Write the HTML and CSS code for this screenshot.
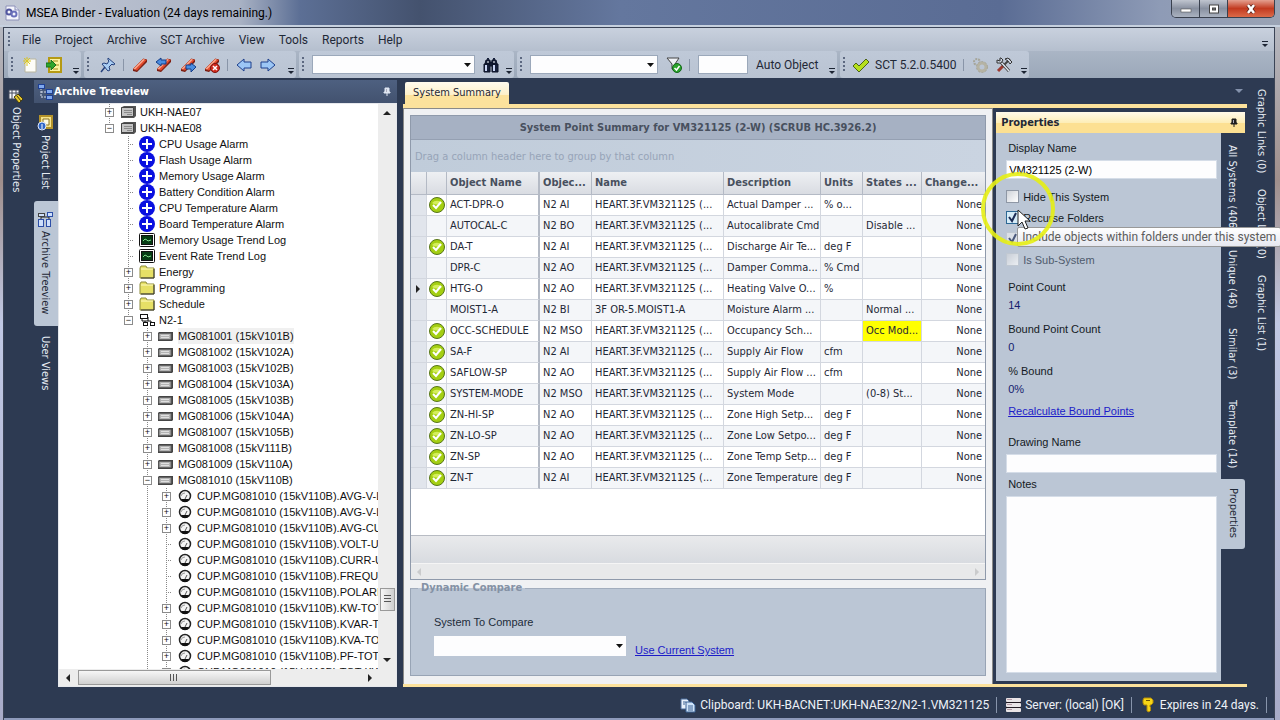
FILE: index.html
```html
<!DOCTYPE html>
<html lang="en">
<head>
<meta charset="utf-8">
<title>MSEA Binder - Evaluation (24 days remaining.)</title>
<link rel="stylesheet" href="styles.css">
</head>
<body>
<svg class="defs" aria-hidden="true">
  <symbol id="i-plus" viewBox="0 0 16 16"><circle cx="8" cy="8" r="8" fill="#0a10e0"/><path d="M8 3v10M3 8h10" stroke="#fff" stroke-width="2"/></symbol>
  <symbol id="i-nae" viewBox="0 0 16 16"><path d="M2 3l2-1h12v10l-2 2H1V4z" fill="#555"/><path d="M1.500 3.500h12v9h-12z" fill="#c4c4c4" stroke="#444"/><path d="M4 6.500h8M4 8.500h8M7 10.500h5" stroke="#8a8a8a"/></symbol>
  <symbol id="i-dev" viewBox="0 0 16 16"><path d="M0 5l1-1h14v8l-1 1H0z" fill="#444"/><path d="M1 5.500h12v6H1z" fill="#b4b4b4" stroke="#666"/><path d="M3 7.500h8M3 9.500h8" stroke="#e0e0e0"/></symbol>
  <symbol id="i-trend" viewBox="0 0 16 16"><rect x="0.500" y="1.500" width="15" height="13" rx="1" fill="#fff" stroke="#111"/><rect x="2.500" y="3.500" width="11" height="9" fill="#063c14" stroke="#111"/><path d="M4 9l2-2 2 1 1 1 3-1" fill="none" stroke="#7fdc8a"/></symbol>
  <symbol id="i-folder" viewBox="0 0 16 16"><path d="M1 4l1-2h5l1 2h7v10H1z" fill="#e6e066" stroke="#8d8b3c"/><path d="M2 5h12" stroke="#fffbc0"/><path d="M15 5v9H2" fill="none" stroke="#333"/></symbol>
  <symbol id="i-net" viewBox="0 0 16 16"><g fill="#fff" stroke="#111"><path d="M3 5v4h9v3M6 9v3M9 5V9" fill="none"/><rect x="1.500" y="2.500" width="7" height="4"/><rect x="4.500" y="10.500" width="4" height="3"/><rect x="11.500" y="10.500" width="4" height="3"/></g></symbol>
  <symbol id="i-pt" viewBox="0 0 16 16"><circle cx="8" cy="8" r="5.500" fill="#f4f4f4" stroke="#222" stroke-width="1.500"/><path d="M4 11h8l-2 3H6z" fill="#111"/><path d="M8 11l2-4" stroke="#555"/><path d="M4 8a4 4 0 0 1 4-3" fill="none" stroke="#999"/></symbol>
  <symbol id="i-ok" viewBox="0 0 16 16"><circle cx="8" cy="8" r="7.500" fill="#a4cf12" stroke="#56751a"/><path d="M3 6a6 5 0 0 1 10 0q-5 3-10 0" fill="#d4ee5c"/><path d="M4 8l3 3 5-6" fill="none" stroke="#fff" stroke-width="2"/></symbol>
  <symbol id="i-tree" viewBox="0 0 16 16"><path d="M4 4v9h5M4 8h5" fill="none" stroke="#d6deee" stroke-dasharray="2 1"/><g fill="#7fa8ee" stroke="#1d3f94"><rect x="1.500" y="0.500" width="6" height="4"/><rect x="9.500" y="5.500" width="6" height="4"/><rect x="9.500" y="11.500" width="6" height="4"/></g></symbol>
  <symbol id="i-tree2" viewBox="0 0 16 16"><path d="M12 4v5M4 6h8M4 6v3" fill="none" stroke="#222"/><g fill="#cfe0fb" stroke="#2d4fa8"><rect x="10.500" y="1.500" width="5" height="4"/><rect x="1.500" y="2.500" width="6" height="3" stroke="#444"/><rect x="1.500" y="8.500" width="5" height="7"/><rect x="9.500" y="8.500" width="4" height="7"/></g></symbol>
  <symbol id="i-pin" viewBox="0 0 10 10"><path d="M3 1h4v4h1v1H2V5h1zM5 6v3" fill="currentColor" stroke="currentColor"/><path d="M4.500 2v3" stroke="#aab"/></symbol>
  <symbol id="i-book" viewBox="0 0 16 16"><path d="M1 12L11 2l4 1-10 11z" fill="#e4492b" stroke="#a02a16"/><path d="M1 12L11 2l2 .5L3 12.500z" fill="#f7a48c"/><path d="M1 12v2l4 1L15 5V3L5 14z" fill="#7a1c10"/></symbol>
  <symbol id="i-more" viewBox="0 0 8 8"><path d="M1 1.500h6" stroke="#1c2433"/><path d="M1 4h6L4 7z" fill="#1c2433"/></symbol>
</svg>

<header class="titlebar">
  <svg class="ic" viewBox="0 0 16 16"><path d="M2 1h9l4 4v10H2z" fill="#f4f5fc" stroke="#8c90b8"/><circle cx="5" cy="7" r="2.500" fill="none" stroke="#5156a0" stroke-width="2"/><circle cx="10" cy="9" r="2.500" fill="none" stroke="#6a70bb" stroke-width="2"/><path d="M11 1v4h4" fill="#dfe2f2" stroke="#8c90b8"/></svg>
  <h1>MSEA Binder - Evaluation (24 days remaining.)</h1>
  <div class="winbtns">
    <button aria-label="Minimize"><svg viewBox="0 0 14 10"><rect x="2" y="5" width="10" height="3" fill="#fff" stroke="#555" stroke-width=".6"/></svg></button>
    <button aria-label="Maximize"><svg viewBox="0 0 14 10"><rect x="2.500" y="1" width="9" height="8" fill="#fff" stroke="#444"/><rect x="5.500" y="4" width="3" height="2" fill="#777" stroke="#444"/></svg></button>
    <button class="close" aria-label="Close"><svg viewBox="0 0 14 10"><path d="M4 1l6 8M10 1L4 9" stroke="#5a2018" stroke-width="4"/><path d="M4 1l6 8M10 1L4 9" stroke="#fff" stroke-width="2.500"/></svg></button>
  </div>
</header>

<div class="app">
  <nav class="menubar">
    <span class="grip"></span>
    <button>File</button><button>Project</button><button>Archive</button><button>SCT Archive</button><button>View</button><button>Tools</button><button>Reports</button><button>Help</button>
    <svg class="more end"><use href="#i-more"/></svg>
  </nav>

  <div class="toolbars">
    <div class="strip s1"><span class="grip"></span>
      <button aria-label="New"><svg class="ic" viewBox="0 0 16 16"><path d="M3 2h11v13H3z" fill="#fdfdf8" stroke="#b9b6a0"/><path d="M5 0v9M1 4h8M2 1l6 6M8 1L2 7" stroke="#d8c62a"/></svg></button>
      <button aria-label="Open"><svg class="ic" viewBox="0 0 16 16"><path d="M3 1h12v14H3z" fill="#fbf3a0" stroke="#b59a14" stroke-width="2"/><path d="M7 4h5M9 8h4M7 12h5" stroke="#a38f20"/><path d="M0 6h5V3l5 5-5 5v-3H0z" fill="#2fa52c" stroke="#17701a"/></svg></button>
      <svg class="more"><use href="#i-more"/></svg></div>
    <div class="strip s2"><span class="grip"></span>
      <button aria-label="Pin"><svg class="ic" viewBox="0 0 16 16"><path d="M8 1l7 6-2 1-1-1-3 3 1 3-2 1-6-7 2-1 3 1 2-3-1-1z" fill="#a9cdf3" stroke="#24407c"/><path d="M5 10l-4 5" stroke="#24407c" stroke-width="1.500"/></svg></button>
      <i class="sep"></i>
      <button aria-label="Bookmark"><svg class="ic"><use href="#i-book"/></svg></button>
      <button aria-label="Previous bookmark"><svg class="ic" viewBox="0 0 16 16"><use href="#i-book" width="16" height="16"/><path d="M0 5l5-4v2h5v4H5v2z" fill="#4a8de0" stroke="#143c88"/></svg></button>
      <button aria-label="Next bookmark"><svg class="ic" viewBox="0 0 16 16"><use href="#i-book" width="16" height="16"/><path d="M16 10l-5-4v2H6v4h5v3z" fill="#4a8de0" stroke="#143c88"/></svg></button>
      <button aria-label="Clear bookmarks"><svg class="ic" viewBox="0 0 16 16"><use href="#i-book" width="16" height="16"/><circle cx="11" cy="11" r="4.500" fill="#d22c20" stroke="#7a1510"/><path d="M9 9l4 4M13 9l-4 4" stroke="#fff" stroke-width="1.500"/></svg></button>
      <i class="sep"></i>
      <button aria-label="Back"><svg class="ic" viewBox="0 0 16 16"><path d="M1 8l7-6v3h7v6H8v3z" fill="#9cc6f5" stroke="#1d3f8c"/></svg></button>
      <button aria-label="Forward"><svg class="ic" viewBox="0 0 16 16"><path d="M15 8L8 2v3H1v6h7v3z" fill="#9cc6f5" stroke="#1d3f8c"/></svg></button>
      <svg class="more"><use href="#i-more"/></svg></div>
    <div class="strip s3"><span class="grip"></span>
      <select aria-label="Search"><option></option></select>
      <button aria-label="Find"><svg class="ic" viewBox="0 0 16 16"><g fill="#17203a" stroke="#0c1226"><path d="M3 3h4v4H2zM9 3h4l1 4H9zM1 7h6v8H1zM9 7h6v8H9z"/><path d="M7 5h2v4H7z"/></g><path d="M4 1h2v2H4zM10 1h2v2h-2z" fill="#17203a"/><path d="M3 8v6M11 8v6" stroke="#c9d4f2" stroke-width="2"/><path d="M5 4v2M11 4v2" stroke="#fff"/></svg></button>
      <svg class="more"><use href="#i-more"/></svg></div>
    <div class="strip s4"><span class="grip"></span>
      <select aria-label="Filter"><option></option></select>
      <button aria-label="Apply filter"><svg class="ic" viewBox="0 0 16 16"><path d="M1 1h12L9 7v7l-3-2V7z" fill="#eef1f6" stroke="#444"/><circle cx="11" cy="11" r="4.500" fill="#2ba52c" stroke="#14661a"/><path d="M8.500 11l2 2 3-4" fill="none" stroke="#fff" stroke-width="1.500"/></svg></button>
      <i class="sep"></i>
      <input type="text" aria-label="Object number">
      <button class="txt">Auto Object</button>
      <svg class="more"><use href="#i-more"/></svg></div>
    <div class="strip s5"><span class="grip"></span>
      <button class="txt sct"><svg class="ic" viewBox="0 0 16 16"><path d="M0 9l3-3 3 3 7-7 3 3L6 15z" fill="#b6e01c" stroke="#4c6416"/></svg>SCT 5.2.0.5400</button>
      <i class="sep"></i>
      <button aria-label="Settings"><svg class="ic" viewBox="0 0 16 16"><g fill="none" stroke="#a5a59a"><circle cx="5" cy="5" r="3" stroke-width="2" stroke-dasharray="2 1"/><circle cx="10" cy="10" r="4" stroke-width="3" stroke="#b5b3a4"/><circle cx="10" cy="10" r="5.500" stroke-dasharray="2 1.500"/></g></svg></button>
      <button aria-label="Tools"><svg class="ic" viewBox="0 0 16 16"><path d="M2 14L8 8" stroke="#9c3a30" stroke-width="3"/><path d="M8 8l6-6" stroke="#444" stroke-width="2"/><path d="M3 3l10 11" stroke="#333" stroke-width="3"/><path d="M3 3l10 11" stroke="#dfe5ee" stroke-width="1.500"/><path d="M1 3v3h4l2-3-2-2H4v3zM9 2l3-1 4 4-2 2-2-3z" fill="#cdd5e2" stroke="#333"/></svg></button>
      <svg class="more"><use href="#i-more"/></svg></div>
  </div>

  <main class="work">
    <nav class="rail outer-left">
      <button><svg class="ic" viewBox="0 0 16 16"><path d="M1 2h10v9H1z" fill="#f6f7fb" stroke="#444a5c"/><path d="M1 5h10M4 2v9M8 2v9" stroke="#444a5c"/><path d="M6 9l4-3 5 5-4 4z" fill="#e6c82c" stroke="#453c10"/><path d="M9 8l4 5" stroke="#453c10"/></svg>Object Properties</button>
    </nav>

    <section class="dock">
      <h2 class="dockhead"><svg class="ic"><use href="#i-tree"/></svg>Archive Treeview<svg class="pin"><use href="#i-pin"/></svg></h2>
      <div class="dockbody">
        <nav class="rail inner-left">
          <button class="pl"><svg class="ic" viewBox="0 0 16 16"><path d="M3 1h12v12H3z" fill="#f7e48c" stroke="#b3922a" stroke-width="2"/><path d="M6 4h6v6H6z" fill="#fffbe0" stroke="#8a7428"/><circle cx="5" cy="11" r="4" fill="#2f66c8" stroke="#dfe8fb"/><path d="M5 9v5" stroke="#fff"/></svg>Project List</button>
          <button class="sel"><svg class="ic"><use href="#i-tree2"/></svg>Archive Treeview</button>
          <button class="uv">User Views</button>
        </nav>
        <div class="treebox">
          <div class="treeview">
            <ul class="tree">
              <li><div class="row"><button class="ex">+</button><svg class="ic"><use href="#i-nae"/></svg>UKH-NAE07</div></li>
              <li><div class="row"><button class="ex">−</button><svg class="ic"><use href="#i-nae"/></svg>UKH-NAE08</div>
                <ul>
                  <li><div class="row leaf"><svg class="ic"><use href="#i-plus"/></svg>CPU Usage Alarm</div></li>
                  <li><div class="row leaf"><svg class="ic"><use href="#i-plus"/></svg>Flash Usage Alarm</div></li>
                  <li><div class="row leaf"><svg class="ic"><use href="#i-plus"/></svg>Memory Usage Alarm</div></li>
                  <li><div class="row leaf"><svg class="ic"><use href="#i-plus"/></svg>Battery Condition Alarm</div></li>
                  <li><div class="row leaf"><svg class="ic"><use href="#i-plus"/></svg>CPU Temperature Alarm</div></li>
                  <li><div class="row leaf"><svg class="ic"><use href="#i-plus"/></svg>Board Temperature Alarm</div></li>
                  <li><div class="row leaf"><svg class="ic"><use href="#i-trend"/></svg>Memory Usage Trend Log</div></li>
                  <li><div class="row leaf"><svg class="ic"><use href="#i-trend"/></svg>Event Rate Trend Log</div></li>
                  <li><div class="row"><button class="ex">+</button><svg class="ic"><use href="#i-folder"/></svg>Energy</div></li>
                  <li><div class="row"><button class="ex">+</button><svg class="ic"><use href="#i-folder"/></svg>Programming</div></li>
                  <li><div class="row"><button class="ex">+</button><svg class="ic"><use href="#i-folder"/></svg>Schedule</div></li>
                  <li><div class="row"><button class="ex">−</button><svg class="ic"><use href="#i-net"/></svg>N2-1</div>
                    <ul>
                      <li><div class="row"><button class="ex">+</button><svg class="ic"><use href="#i-dev"/></svg><span class="hot">MG081001 (15kV101B)</span></div></li>
                      <li><div class="row"><button class="ex">+</button><svg class="ic"><use href="#i-dev"/></svg>MG081002 (15kV102A)</div></li>
                      <li><div class="row"><button class="ex">+</button><svg class="ic"><use href="#i-dev"/></svg>MG081003 (15kV102B)</div></li>
                      <li><div class="row"><button class="ex">+</button><svg class="ic"><use href="#i-dev"/></svg>MG081004 (15kV103A)</div></li>
                      <li><div class="row"><button class="ex">+</button><svg class="ic"><use href="#i-dev"/></svg>MG081005 (15kV103B)</div></li>
                      <li><div class="row"><button class="ex">+</button><svg class="ic"><use href="#i-dev"/></svg>MG081006 (15kV104A)</div></li>
                      <li><div class="row"><button class="ex">+</button><svg class="ic"><use href="#i-dev"/></svg>MG081007 (15kV105B)</div></li>
                      <li><div class="row"><button class="ex">+</button><svg class="ic"><use href="#i-dev"/></svg>MG081008 (15kV111B)</div></li>
                      <li><div class="row"><button class="ex">+</button><svg class="ic"><use href="#i-dev"/></svg>MG081009 (15kV110A)</div></li>
                      <li class="open"><div class="row"><button class="ex">−</button><svg class="ic"><use href="#i-dev"/></svg>MG081010 (15kV110B)</div>
                        <ul>
                          <li><div class="row"><button class="ex">+</button><svg class="ic"><use href="#i-pt"/></svg>CUP.MG081010 (15kV110B).AVG-V-L</div></li>
                          <li><div class="row"><button class="ex">+</button><svg class="ic"><use href="#i-pt"/></svg>CUP.MG081010 (15kV110B).AVG-V-L</div></li>
                          <li><div class="row"><button class="ex">+</button><svg class="ic"><use href="#i-pt"/></svg>CUP.MG081010 (15kV110B).AVG-CU</div></li>
                          <li><div class="row leaf"><svg class="ic"><use href="#i-pt"/></svg>CUP.MG081010 (15kV110B).VOLT-U</div></li>
                          <li><div class="row leaf"><svg class="ic"><use href="#i-pt"/></svg>CUP.MG081010 (15kV110B).CURR-U</div></li>
                          <li><div class="row leaf"><svg class="ic"><use href="#i-pt"/></svg>CUP.MG081010 (15kV110B).FREQUN</div></li>
                          <li><div class="row leaf"><svg class="ic"><use href="#i-pt"/></svg>CUP.MG081010 (15kV110B).POLARI</div></li>
                          <li><div class="row"><button class="ex">+</button><svg class="ic"><use href="#i-pt"/></svg>CUP.MG081010 (15kV110B).KW-TOT</div></li>
                          <li><div class="row"><button class="ex">+</button><svg class="ic"><use href="#i-pt"/></svg>CUP.MG081010 (15kV110B).KVAR-TO</div></li>
                          <li><div class="row"><button class="ex">+</button><svg class="ic"><use href="#i-pt"/></svg>CUP.MG081010 (15kV110B).KVA-TO</div></li>
                          <li><div class="row"><button class="ex">+</button><svg class="ic"><use href="#i-pt"/></svg>CUP.MG081010 (15kV110B).PF-TOT</div></li>
                          <li><div class="row"><button class="ex">+</button><svg class="ic"><use href="#i-pt"/></svg>CUP.MG081010 (15kV110B).TOT-KW</div></li>
                        </ul></li>
                    </ul></li>
                </ul></li>
            </ul>
          </div>
          <div class="vscroll"><i class="tri up"></i><span class="vspace"></span><span class="vthumb"></span><span class="vrest"></span><i class="tri down"></i></div>
          <div class="hscroll"><i class="tri left"></i><span class="hthumb"></span><span class="hspace"></span><i class="tri right"></i></div>
        </div>
      </div>
    </section>

    <section class="center">
      <div class="tabs"><button class="tab">System Summary</button><i class="tri down"></i></div>
      <div class="docs">
        <article class="doc">
          <div class="grid">
            <h2>System Point Summary for VM321125 (2-W) (SCRUB HC.3926.2)</h2>
            <p class="group">Drag a column header here to group by that column</p>
            <table>
              <colgroup><col class="c1"><col class="c2"><col class="c3"><col class="c4"><col class="c5"><col class="c6"><col class="c7"><col class="c8"><col class="c9"></colgroup>
              <thead><tr><th></th><th></th><th>Object Name</th><th>Objec...</th><th>Name</th><th>Description</th><th>Units</th><th>States ...</th><th>Change...</th></tr></thead>
              <tbody>
                <tr><td></td><td><svg class="ic"><use href="#i-ok"/></svg></td><td>ACT-DPR-O</td><td>N2 AI</td><td>HEART.3F.VM321125 (...</td><td>Actual Damper ...</td><td>% o...</td><td></td><td>None</td></tr>
                <tr><td></td><td></td><td>AUTOCAL-C</td><td>N2 BO</td><td>HEART.3F.VM321125 (...</td><td>Autocalibrate Cmd</td><td></td><td>Disable ...</td><td>None</td></tr>
                <tr><td></td><td><svg class="ic"><use href="#i-ok"/></svg></td><td>DA-T</td><td>N2 AI</td><td>HEART.3F.VM321125 (...</td><td>Discharge Air Te...</td><td>deg F</td><td></td><td>None</td></tr>
                <tr><td></td><td></td><td>DPR-C</td><td>N2 AO</td><td>HEART.3F.VM321125 (...</td><td>Damper Comma...</td><td>% Cmd</td><td></td><td>None</td></tr>
                <tr><td><i class="tri right"></i></td><td><svg class="ic"><use href="#i-ok"/></svg></td><td>HTG-O</td><td>N2 AO</td><td>HEART.3F.VM321125 (...</td><td>Heating Valve O...</td><td>%</td><td></td><td>None</td></tr>
                <tr><td></td><td></td><td>MOIST1-A</td><td>N2 BI</td><td>3F OR-5.MOIST1-A</td><td>Moisture Alarm ...</td><td></td><td>Normal ...</td><td>None</td></tr>
                <tr><td></td><td><svg class="ic"><use href="#i-ok"/></svg></td><td>OCC-SCHEDULE</td><td>N2 MSO</td><td>HEART.3F.VM321125 (...</td><td>Occupancy Sch...</td><td></td><td class="mark">Occ Mod...</td><td>None</td></tr>
                <tr><td></td><td><svg class="ic"><use href="#i-ok"/></svg></td><td>SA-F</td><td>N2 AI</td><td>HEART.3F.VM321125 (...</td><td>Supply Air Flow</td><td>cfm</td><td></td><td>None</td></tr>
                <tr><td></td><td><svg class="ic"><use href="#i-ok"/></svg></td><td>SAFLOW-SP</td><td>N2 AO</td><td>HEART.3F.VM321125 (...</td><td>Supply Air Flow ...</td><td>cfm</td><td></td><td>None</td></tr>
                <tr><td></td><td><svg class="ic"><use href="#i-ok"/></svg></td><td>SYSTEM-MODE</td><td>N2 MSO</td><td>HEART.3F.VM321125 (...</td><td>System Mode</td><td></td><td>(0-8) St...</td><td>None</td></tr>
                <tr><td></td><td><svg class="ic"><use href="#i-ok"/></svg></td><td>ZN-HI-SP</td><td>N2 AO</td><td>HEART.3F.VM321125 (...</td><td>Zone High Setp...</td><td>deg F</td><td></td><td>None</td></tr>
                <tr><td></td><td><svg class="ic"><use href="#i-ok"/></svg></td><td>ZN-LO-SP</td><td>N2 AO</td><td>HEART.3F.VM321125 (...</td><td>Zone Low Setpo...</td><td>deg F</td><td></td><td>None</td></tr>
                <tr><td></td><td><svg class="ic"><use href="#i-ok"/></svg></td><td>ZN-SP</td><td>N2 AO</td><td>HEART.3F.VM321125 (...</td><td>Zone Temp Setp...</td><td>deg F</td><td></td><td>None</td></tr>
                <tr><td></td><td><svg class="ic"><use href="#i-ok"/></svg></td><td>ZN-T</td><td>N2 AI</td><td>HEART.3F.VM321125 (...</td><td>Zone Temperature</td><td>deg F</td><td></td><td>None</td></tr>
              </tbody>
            </table>
            <div class="blank"></div>
            <div class="foot"></div>
            <div class="ghost"><i class="tri left"></i><i class="tri right"></i></div>
          </div>
          <fieldset>
            <legend>Dynamic Compare</legend>
            <label for="cmp">System To Compare</label>
            <div class="cmprow"><select id="cmp"><option></option></select><a href="#">Use Current System</a></div>
          </fieldset>
        </article>

        <aside class="props">
          <h2>Properties<svg class="pin"><use href="#i-pin"/></svg></h2>
          <div class="propbody">
            <form>
              <label for="dn">Display Name</label>
              <input id="dn" type="text" value="VM321125 (2-W)">
              <label class="chk"><input type="checkbox">Hide This System</label>
              <div class="hover">
                <label class="chk"><input type="checkbox" class="focus" checked>Recurse Folders</label>
                <div class="tip" role="tooltip">Include objects within folders under this system</div>
                <svg class="ring" viewBox="0 0 76 76"><circle cx="38" cy="38" r="35" fill="none" stroke="#e6ee14" stroke-opacity=".9" stroke-width="4"/><path d="M38 39v16l4-4 3 7 3-1-3-7h5z" fill="#fff" stroke="#222"/></svg>
              </div>
              <label class="chk off"><input type="checkbox" aria-label="Unavailable option" checked disabled></label>
              <label class="chk off"><input type="checkbox" disabled>Is Sub-System</label>
              <dl>
                <dt>Point Count</dt><dd>14</dd>
                <dt>Bound Point Count</dt><dd>0</dd>
                <dt>% Bound</dt><dd>0%</dd>
              </dl>
              <a href="#">Recalculate Bound Points</a>
              <label for="dr">Drawing Name</label>
              <input id="dr" type="text">
              <label class="nl" for="nt">Notes</label>
              <textarea id="nt"></textarea>
            </form>
            <nav class="rail inner-right">
              <button>All Systems (406)</button><button>Unique (46)</button><button>Similar (3)</button><button>Template (14)</button><button class="sel">Properties</button>
            </nav>
          </div>
        </aside>
      </div>
    </section>

    <nav class="rail outer-right">
      <button>Graphic Links (0)</button><button>Object List (0)</button><button>Graphic List (1)</button>
    </nav>
  </main>

  <footer class="status">
    <span><svg class="ic" viewBox="0 0 16 16"><path d="M1 2h6l2 2v8H1z" fill="#e8f1fb" stroke="#4a6d9c"/><path d="M6 5h6l3 3v7H6z" fill="#cfe3f8" stroke="#3c6294"/><path d="M8 9h5M8 11h5M8 13h5M3 5h3M3 7h2" stroke="#3c6294"/></svg>Clipboard: UKH-BACNET:UKH-NAE32/N2-1.VM321125</span>
    <span><svg class="ic" viewBox="0 0 16 16"><g fill="#e9e4e6"><rect x="1" y="1" width="15" height="4" rx="1"/><rect x="1" y="6" width="15" height="4" rx="1"/><rect x="1" y="11" width="15" height="4" rx="1"/></g><path d="M1 5.500h15M1 10.500h15" stroke="#221a22"/><path d="M2 2.500h5M2 7.500h5M2 12.500h5" stroke="#b59aa6"/></svg>Server: (local) [OK]</span>
    <span><svg class="ic" viewBox="0 0 16 16"><path d="M4 1h7l2 2v3l-2 2h-1v2l1 1-1 1 1 1-2 2-2-1V8H4L3 6V3z" fill="#f7d516" stroke="#b38c08"/><rect x="6" y="3" width="4" height="1" fill="#6d5300"/></svg>Expires in 24 days.</span>
  </footer>
</div>
</body>
</html>
```
FILE: styles.css
```css
:root {
  --navy: #2d3a52;
  --panel: #bbc6d5;
  --sand: #fce29c;
  --ui: Roboto, "Noto Sans", sans-serif;
  --tahoma: "DejaVu Sans Condensed", "Noto Sans", sans-serif;
  --plain: "Liberation Sans", Arial, sans-serif;
}
* { box-sizing: border-box; }
body {
  margin: 0;
  height: 100vh;
  overflow: hidden;
  display: flex;
  flex-direction: column;
  font: 12px/16px var(--ui);
  color: #1f2836;
  background: linear-gradient(#b9bfca, #a08f8c 25%, #c0c8e4 45%, #a8abc8);
}
h1, h2, p, ul, dl, dd, fieldset { margin: 0; padding: 0; }
button { font: inherit; color: inherit; background: none; border: 0; padding: 0; }
input, select, textarea { font: inherit; border: 0; border-radius: 0; background: #fdfdfe; margin: 0; }
svg { display: block; }
.defs { position: absolute; width: 0; height: 0; }
.ic { width: 16px; height: 16px; flex: none; }

.titlebar {
  flex: none;
  height: 27px;
  display: flex;
  align-items: center;
  gap: 6px;
  padding-left: 4px;
  border-bottom: 2px solid #c6d0de;
  background: linear-gradient(90deg, #c3c9d6, #a9b2c4 240px, #5c6f95 300px, #44526e 420px, #64779e 620px, #5a6c94 1000px, #8e9bb6 1160px, #9aa3b4);
}
.titlebar h1 { font: 12px/16px var(--ui); color: #000; flex: 1; }
.winbtns { display: flex; align-self: flex-start; margin-right: 5px; border: 1px solid #39404e; border-top: 0; border-radius: 0 0 5px 5px; overflow: hidden; }
.winbtns button { width: 28px; height: 17px; display: grid; place-items: center; background: linear-gradient(#c0c5cf, #8890a0 50%, #aab2c0); border-right: 1px solid #39404e; }
.winbtns svg { width: 14px; height: 10px; }
.winbtns .close { width: 46px; border: 0; background: linear-gradient(#e4a090, #c23a20 50%, #dc6a48); }

.app {
  flex: 1;
  min-height: 0;
  margin: 0 5px 0 3px;
  display: flex;
  flex-direction: column;
  background: var(--navy);
  border: 1px solid #3b4456;
  border-bottom: 0;
}
.grip { flex: none; width: 2px; height: 15px; background: repeating-linear-gradient(#5c6880 0 2px, transparent 2px 4px); }
.menubar { flex: none; height: 23px; display: flex; align-items: center; padding: 0 5px 0 4px; background: linear-gradient(#c9d1de, #b5bfce); }
.menubar button { margin-left: 14px; }
.menubar .grip + button { margin-left: 12px; }
.more { width: 8px; height: 8px; flex: none; }
.menubar .end { margin: 8px 0 0 auto; }

.toolbars { flex: none; height: 27px; display: flex; gap: 3px; padding: 0 4px; background: linear-gradient(#aab5c5, #9ba8b9); }
.strip { display: flex; align-items: center; padding: 0 1px 0 3px; border-radius: 3px; background: linear-gradient(#bfc9d8, #b9c3d2); }
.strip button, .strip select, .strip input, .strip .sep { margin-left: 8px; flex: none; }
.strip .more { margin: 12px 0 0 auto; }
.strip .txt { display: flex; gap: 6px; align-items: center; }
.strip .sep { width: 1px; height: 12px; background: #8995a8; margin-left: 7px; }
.strip select, .strip input { height: 19px; border: 1px solid #9ba8ba; }
.s1 { width: 73px; }
.s1 .grip + button { margin-left: 9px; }
.s2 { width: 212px; }
.s2 .grip + button { margin-left: 11px; }
.s3 { width: 215px; }
.s3 select { width: 163px; }
.s4 { width: 320px; }
.s4 select { width: 128px; }
.s4 input { width: 50px; }
.s5 { width: 189px; }

select {
  appearance: none;
  background: #fdfdfe url("data:image/svg+xml,%3Csvg xmlns='http://www.w3.org/2000/svg' width='7' height='4'%3E%3Cpath d='M0 0h7L3.500 4z' fill='%23111'/%3E%3C/svg%3E") no-repeat right 3px center;
}

.work { flex: 1; min-height: 0; display: flex; color: #fff; }
.rail { flex: none; display: flex; flex-direction: column; font: 11px/16px var(--tahoma); color: #e8edf5; }
.rail button { writing-mode: vertical-rl; display: flex; align-items: center; white-space: nowrap; }
.outer-left { width: 30px; padding-top: 10px; align-items: flex-start; }
.outer-left button { margin-left: 4px; gap: 3px; }
.outer-right { width: 27px; padding: 11px 0 0 6px; gap: 16px; align-items: flex-start; }

.dock { flex: none; width: 363px; padding-top: 2px; display: flex; flex-direction: column; }
.dockhead { height: 23px; flex: none; display: flex; align-items: center; gap: 1px; padding: 0 5px 0 3px; font: bold 11px/16px var(--tahoma); color: #fff; background: linear-gradient(#4e6080, #42526f); }
.pin { width: 10px; height: 10px; margin-left: auto; color: #dfe6f2; }
.dockbody { flex: 1; min-height: 0; display: flex; }
.inner-left { width: 24px; padding-top: 12px; }
.rail.inner-left button { padding-right: 3px; gap: 4px; }
.inner-left .pl { margin-bottom: 12px; }
.rail .sel { color: #1f2836; background: var(--panel); border-radius: 3px 0 0 3px; }
.inner-left .sel { padding: 10px 0 11px; margin-bottom: 10px; }

.treebox { flex: 1; min-width: 0; display: grid; grid-template: minmax(0, 1fr) 17px / minmax(0, 1fr) 18px; background: #fff; border: 1px solid #e6e8ec; margin-bottom: 1px; color: #111; }
.treeview { overflow: hidden; padding-left: 46px; font: 11px/16px var(--plain); }
.tree, .tree ul { list-style: none; }
.tree ul { padding-left: 19px; }
.tree li { background: repeating-linear-gradient(#888 0 1px, transparent 1px 2px) 4px 0 / 1px 100% no-repeat; }
.tree li:last-child:not(.open) { background-size: 1px 8px; }
.row { height: 16px; display: flex; align-items: center; white-space: nowrap; }
.row .ex { width: 9px; height: 9px; flex: none; border: 1px solid #8b8b8b; background: #fff; font: 9px/7px var(--plain); text-align: center; }
.row .ic { margin: 0 4px 0 6px; }
.row.leaf::before { content: ""; width: 5px; height: 1px; flex: none; margin-left: 4px; background: repeating-linear-gradient(90deg, #888 0 1px, transparent 1px 2px); }
.hot { background: #f0f0f0; }
.tri { display: block; width: 0; height: 0; flex: none; border: 4px solid transparent; }
.tri.up { border-top: 0; border-bottom-color: #222; }
.tri.down { border-bottom: 0; border-top-color: #222; }
.tri.left { border-left: 0; border-right-color: #222; }
.tri.right { border-right: 0; border-left-color: #222; }
.vscroll { background: #ededed; display: flex; flex-direction: column; align-items: center; padding: 7px 0; }
.vspace { flex: 472; }
.vthumb { width: 15px; height: 23px; border: 1px solid #999; background: repeating-linear-gradient(#555 0 1px, transparent 1px 3px) center / 7px 9px no-repeat, linear-gradient(90deg, #f6f6f6, #cfcfcf); }
.vrest { flex: 47; }
.hscroll { grid-column: 1 / 3; background: #ededed; display: flex; align-items: center; padding: 0 24px 0 7px; }
.hthumb { flex: 192; margin-left: 8px; height: 15px; border: 1px solid #999; background: repeating-linear-gradient(90deg, #555 0 1px, transparent 1px 3px) center / 9px 7px no-repeat, linear-gradient(#f6f6f6, #d0d0d0); }
.hspace { flex: 98; }

.center { flex: 1; min-width: 0; margin: 0 0 1px 6px; display: flex; flex-direction: column; }
.tabs { height: 26px; flex: none; display: flex; align-items: flex-end; justify-content: space-between; padding: 0 4px 0 2px; }
.tab { height: 22px; padding: 0 8px; font: 11px/20px var(--tahoma); color: #1f2836; background: linear-gradient(#fffbee, #fdf0c8 60%, #fce29c 61%); border-radius: 2px 2px 0 0; }
.tabs .tri { border-top-color: #8492ac; margin-bottom: 11px; }
.docs { flex: 1; min-height: 0; display: flex; gap: 2px; border: solid var(--sand); border-width: 4px 0 3px; }
.doc { flex: 588; min-width: 0; display: flex; flex-direction: column; padding: 6px 6px 8px; background: #f0f1f3; border: solid #8a8a88; border-width: 1px 1px 0 1px; }
.grid { flex: 1; min-height: 0; display: flex; flex-direction: column; border: 1px solid #8f9aab; background: #fff; font: 11px/16px var(--tahoma); color: #1f2836; }
.grid h2 { flex: none; height: 24px; font: bold 11px/24px var(--tahoma); text-align: center; color: #48505e; background: #a6b1c3; border-bottom: 1px solid #95a0b2; }
.group { flex: none; height: 32px; padding-left: 4px; line-height: 34px; color: #97a4b8; background: linear-gradient(90deg, #c0ccda, #cad4e1); }
table { width: 100%; table-layout: fixed; border-collapse: separate; border-spacing: 0; flex: none; }
.c1 { width: 16px; } .c2 { width: 20px; } .c3 { width: 93px; } .c4 { width: 52px; } .c5 { width: 132px; }
.c6 { width: 97px; } .c7 { width: 42px; } .c8 { width: 59px; } .c9 { width: 63px; }
th, td { padding: 0 3px; overflow: hidden; white-space: nowrap; text-align: left; border: solid #d3d7df; border-width: 0 1px 1px 0; }
th { height: 23px; color: #48505e; background: linear-gradient(#eef0f3, #d9dce2); border-color: #b4bac5; }
td { height: 21px; }
tr:nth-child(even) td { background: #f4f6f9; }
tbody td:first-child { background: #e1e5ec !important; padding: 0 5px; }
td:nth-child(2) { padding: 0 2px; }
th:nth-child(3), td:nth-child(3) { border-right: 2px solid #b4bac5; }
th:last-child, td:last-child { border-right: 0; }
td:last-child { text-align: right; }
tbody .mark, tbody tr:nth-child(even) .mark { background: #ffff00; }
.blank { flex: 1; }
.foot { flex: none; height: 28px; background: linear-gradient(#e9eaec, #d8dbe0); border-top: 1px solid #b8bcc4; }
.ghost { flex: none; height: 16px; display: flex; justify-content: space-between; align-items: center; padding: 0 6px; background: #e8e9ea; border-top: 1px solid #f5f5f5; }
.ghost .tri { opacity: .15; }
fieldset { flex: none; min-width: 0; height: 96px; padding: 18px 0 0 23px; border: 1px solid #98a4b5; border-top-color: #a2adbd; background: var(--panel); font: 11px/16px var(--plain); color: #222c3a; }
fieldset legend { margin-left: -16px; padding: 0 3px; font: bold 11px/16px var(--tahoma); color: #8592a5; }
fieldset label { display: block; }
.cmprow { display: flex; align-items: flex-end; gap: 9px; margin-top: 6px; }
.cmprow select { width: 192px; height: 20px; margin-bottom: 2px; }
a { color: #1c1cc8; }

.props { flex: 254; min-width: 0; padding: 4px 2px 3px 1px; display: flex; flex-direction: column; background: var(--navy); }
.props h2 { height: 21px; flex: none; display: flex; align-items: center; padding: 0 6px 0 5px; font: bold 11px/16px var(--tahoma); color: #1f2836; background: linear-gradient(#fffaea, #fdeeb8 50%, #fce092 51%); }
.props .pin { color: #1f1f1f; }
.propbody { flex: 1; min-height: 0; display: flex; }
form { flex: 1; min-width: 0; display: flex; flex-direction: column; align-items: stretch; padding: 7px 4px 8px 10px; background: var(--panel); font: 11px/16px var(--plain); color: #141a24; }
form > label, dl, form > a { margin-left: 2px; }
form > input { height: 19px; padding: 0 2px; margin: 4px 0 7px; flex: none; border: 1px solid #d5dde8; }
form .chk { display: flex; align-items: center; gap: 4px; height: 21px; margin-left: 0; }
.chk input { appearance: none; width: 13px; height: 13px; flex: none; border: 1px solid #8e97a5; background: linear-gradient(135deg, #cfd3d9, #fff); }
.chk input:checked { background: url("data:image/svg+xml,%3Csvg xmlns='http://www.w3.org/2000/svg' width='11' height='11'%3E%3Cpath d='M2 5l3 4 4-8' fill='none' stroke='%231c2c55' stroke-width='2'/%3E%3C/svg%3E") center no-repeat, #d6ecf8; }
.chk input.focus { border-color: #2c6894; }
.chk.off { color: #4f5b6d; }
.chk.off input { border-color: #c3c9d2; background-color: #e9ecf0; opacity: .7; }
.hover { position: relative; }
.tip { position: absolute; z-index: 2; left: 11px; top: 20px; padding: 0 4px; font: 12px/18px var(--ui); white-space: nowrap; color: #5c5c5c; background: linear-gradient(#fff, #e6e8f0); border: 1px solid #999; border-radius: 2px; }
.ring { position: absolute; z-index: 3; width: 76px; height: 76px; left: -26px; top: -36px; }
dl { margin-top: 9px; }
dd { color: #14206e; margin: 2px 0 8px; }
form > a { margin-bottom: 15px; margin-top: -2px; }
form > .nl { margin-top: -4px; }
textarea { flex: 1; min-height: 0; resize: none; margin-top: 4px; border: 1px solid #d5dde8; }
.inner-right { width: 24px; padding-top: 12px; }
.inner-right button { height: 85px; padding-left: 0; margin-bottom: 20px; padding-right: 3px; }
.inner-right button:not(:first-child) { height: auto; }
.inner-right .sel { border-radius: 0 3px 3px 0; padding: 9px 0 11px; margin-top: -9px; }

.status { flex: none; height: 32px; display: flex; justify-content: flex-end; align-items: center; padding: 3px 7px 0 0; color: #eef2f8; border-bottom: 2px solid #8e9abb; }
.status span { display: flex; align-items: center; gap: 4px; padding: 0 7px 0 8px; border-right: 1px solid #8794ab; white-space: nowrap; }
```
